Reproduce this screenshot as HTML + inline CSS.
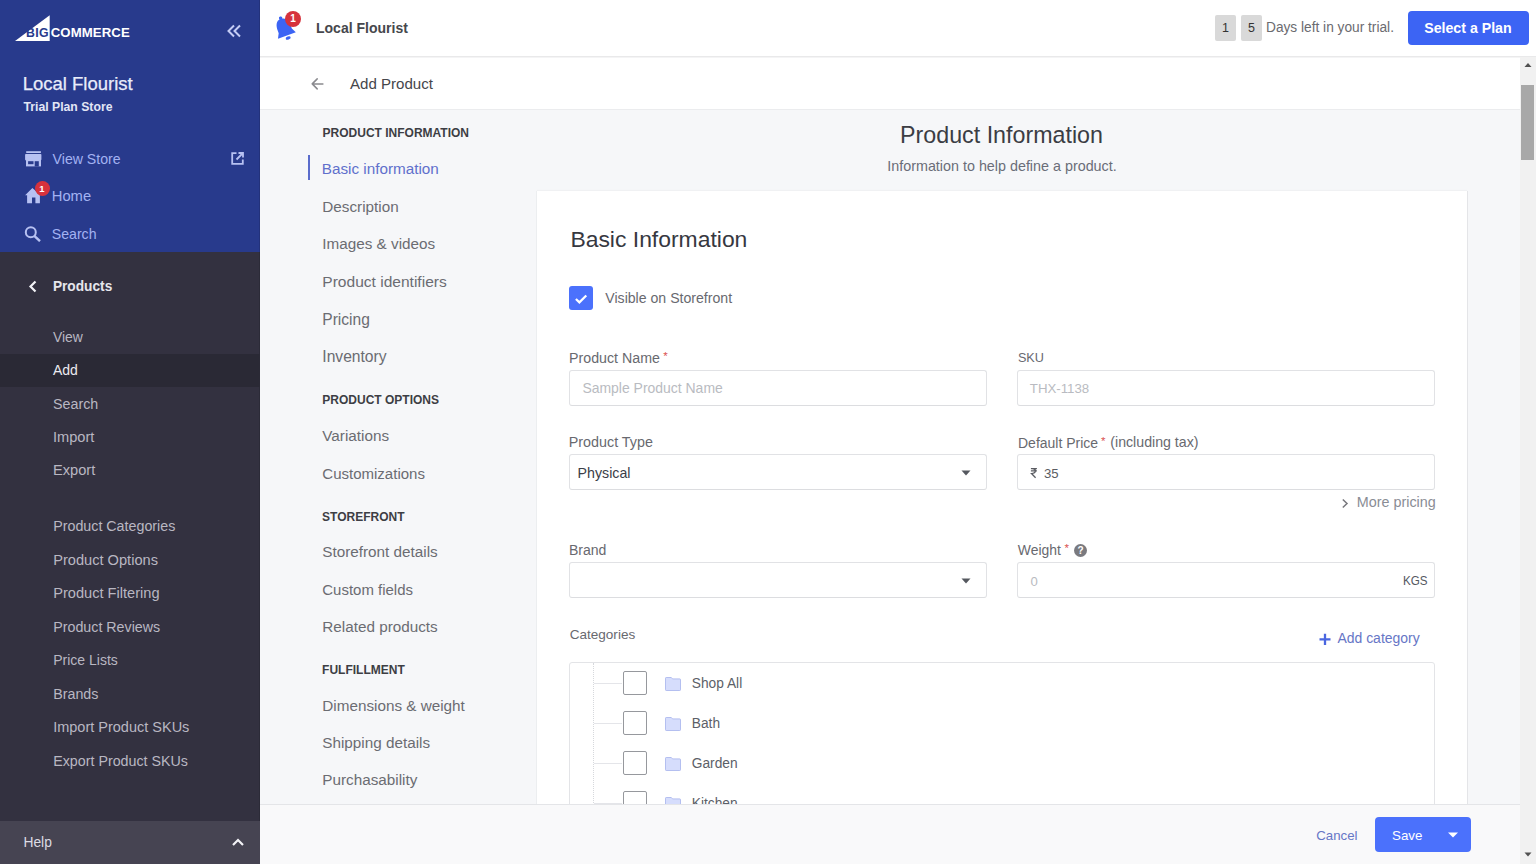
<!DOCTYPE html>
<html><head><meta charset="utf-8"><title>Add Product</title>
<style>
html,body{margin:0;padding:0;width:1536px;height:864px;overflow:hidden;background:#f6f7f9}
body{position:relative;font-family:"Liberation Sans",sans-serif}
.t{position:absolute;white-space:nowrap;line-height:1;font-family:"Liberation Sans",sans-serif}
.r{position:absolute}
</style></head><body>
<div class="r" style="left:0px;top:0px;width:260px;height:252px;background:#283a8c"></div>
<div class="r" style="left:0px;top:252px;width:260px;height:612px;background:#333140"></div>
<div class="r" style="left:259px;top:0px;width:1px;height:821px;background:rgba(0,0,0,0.12)"></div>
<div class="r" style="left:0px;top:354px;width:260px;height:33px;background:#2a2935"></div>
<div class="r" style="left:0px;top:821px;width:260px;height:43px;background:#464452"></div>
<svg class="r" style="left:14px;top:14px" width="120" height="30" viewBox="0 0 120 30">
<path d="M1 27 L35.7 1.3 L35.7 27 Z" fill="#fff"/>
</svg>
<div class="t" style="left:26.00px;top:26.90px;font-size:12.285px;color:#283a8c;font-weight:700;letter-spacing:0.4px">BIG</div>
<div class="t" style="left:50.70px;top:26.12px;font-size:13.200px;color:#fff;font-weight:700;letter-spacing:0.1px">COMMERCE</div>
<svg class="r" style="left:226px;top:24px" width="16" height="14" viewBox="0 0 16 14">
<path d="M8 1.5 L2.5 7 L8 12.5 M14 1.5 L8.5 7 L14 12.5" fill="none" stroke="#c4ccf5" stroke-width="2"/>
</svg>
<div class="t" style="left:22.66px;top:74.94px;font-size:18.500px;color:#e8ecfa;-webkit-text-stroke:0.25px #e8ecfa">Local Flourist</div>
<div class="t" style="left:23.50px;top:100.84px;font-size:12.230px;color:#e2e6f6;font-weight:700;">Trial Plan Store</div>
<svg class="r" style="left:25px;top:150px" width="18" height="18" viewBox="0 0 18 18">
<rect x="1.2" y="1.2" width="14.7" height="1.8" fill="#b7c1f2"/>
<rect x="0.1" y="3.9" width="16.3" height="6.5" rx="0.8" fill="#b7c1f2"/>
<rect x="1" y="10" width="15" height="6.4" fill="#b7c1f2"/>
<rect x="3.1" y="11.2" width="5.4" height="3" fill="#283a8c"/>
<rect x="9.7" y="11.2" width="4.1" height="5.3" fill="#283a8c"/>
</svg>
<div class="t" style="left:52.60px;top:152.44px;font-size:14.120px;color:#a3b2f2;">View Store</div>
<svg class="r" style="left:231px;top:152px" width="13" height="13" viewBox="0 0 13 13">
<path d="M5.5 1.2 H1.2 V11.8 H11.8 V7.5" fill="none" stroke="#b7c1f2" stroke-width="1.8"/>
<path d="M7.5 1 H12 V5.5 M12 1 L5.5 7.5" fill="none" stroke="#b7c1f2" stroke-width="1.8"/>
</svg>
<svg class="r" style="left:24px;top:187px" width="18" height="18" viewBox="0 0 18 18">
<path d="M8.4 0.9 L16.5 8.2 H15.9 V16.3 H11.4 V10.6 H8 V16.3 H3.1 V8.2 H1.1 Z" fill="#b7c1f2"/>
</svg>
<div class="r" style="left:34.5px;top:181px;width:15px;height:15px;border-radius:50%;background:#d6323c;color:#fff;font:700 9.5px/15px 'Liberation Sans',sans-serif;text-align:center">1</div>
<div class="t" style="left:51.76px;top:189.30px;font-size:14.760px;color:#a3b2f2;">Home</div>
<svg class="r" style="left:24px;top:226px" width="18" height="16" viewBox="0 0 18 16">
<circle cx="6.8" cy="6.3" r="5" fill="none" stroke="#b7c1f2" stroke-width="2"/>
<path d="M10.3 9.8 L16 15.2" stroke="#b7c1f2" stroke-width="2.4"/>
</svg>
<div class="t" style="left:51.76px;top:227.33px;font-size:14.135px;color:#a3b2f2;">Search</div>
<svg class="r" style="left:28px;top:280px" width="10" height="13" viewBox="0 0 10 13">
<path d="M7.5 1.5 L2.5 6.5 L7.5 11.5" fill="none" stroke="#f2f2f6" stroke-width="2.2"/>
</svg>
<div class="t" style="left:52.90px;top:279.99px;font-size:13.710px;color:#e6e6ec;font-weight:700;">Products</div>
<div class="t" style="left:52.90px;top:331.22px;font-size:13.913px;color:#b9b7c2;">View</div>
<div class="t" style="left:52.90px;top:363.25px;font-size:13.996px;color:#ecebf0;">Add</div>
<div class="t" style="left:53.00px;top:396.72px;font-size:14.270px;color:#b9b7c2;">Search</div>
<div class="t" style="left:53.00px;top:430.32px;font-size:14.627px;color:#b9b7c2;">Import</div>
<div class="t" style="left:53.00px;top:463.02px;font-size:14.627px;color:#b9b7c2;">Export</div>
<div class="t" style="left:53.20px;top:519.32px;font-size:14.270px;color:#b9b7c2;">Product Categories</div>
<div class="t" style="left:53.20px;top:552.62px;font-size:14.627px;color:#b9b7c2;">Product Options</div>
<div class="t" style="left:53.20px;top:586.32px;font-size:14.627px;color:#b9b7c2;">Product Filtering</div>
<div class="t" style="left:53.20px;top:619.92px;font-size:14.270px;color:#b9b7c2;">Product Reviews</div>
<div class="t" style="left:53.20px;top:653.22px;font-size:14.029px;color:#b9b7c2;">Price Lists</div>
<div class="t" style="left:53.20px;top:686.52px;font-size:14.270px;color:#b9b7c2;">Brands</div>
<div class="t" style="left:53.20px;top:719.72px;font-size:14.506px;color:#b9b7c2;">Import Product SKUs</div>
<div class="t" style="left:53.20px;top:753.82px;font-size:14.270px;color:#b9b7c2;">Export Product SKUs</div>
<div class="t" style="left:23.40px;top:835.68px;font-size:13.837px;color:#dddce4;">Help</div>
<svg class="r" style="left:231px;top:837px" width="14" height="10" viewBox="0 0 14 10">
<path d="M2 8 L7 3 L12 8" fill="none" stroke="#f2f2f6" stroke-width="2.2"/>
</svg>
<div class="r" style="left:260px;top:0px;width:1276px;height:864px;background:#f6f7f9"></div>
<div class="r" style="left:260px;top:0px;width:1276px;height:56px;background:#fff"></div>
<div class="r" style="left:260px;top:56px;width:1276px;height:1px;background:#e9e9ea"></div>
<div class="r" style="left:260px;top:57px;width:1276px;height:1px;background:#f4f4f5"></div>
<div class="r" style="left:260px;top:58px;width:1260px;height:51px;background:#fff"></div>
<div class="r" style="left:260px;top:109px;width:1260px;height:1px;background:#ebecee"></div>
<svg class="r" style="left:266px;top:6px" width="40" height="40" viewBox="0 0 40 40">
<g transform="translate(20.9,29.4) rotate(-20)" fill="#3c64f4">
<circle cx="0" cy="-18.3" r="1.7"/>
<path d="M0 -17.6 C-5.8 -17.6 -7 -12 -7 -8 L-7 -4.8 L-9.5 0 H9.5 L7 -4.8 L7 -8 C7 -12 5.8 -17.6 0 -17.6 Z"/>
<ellipse cx="0.3" cy="2.9" rx="2.6" ry="1.5"/>
</g>
</svg>
<div class="r" style="left:285px;top:10.5px;width:16.2px;height:16.2px;border-radius:50%;background:#d6323c;color:#fff;font:700 10px/16.2px 'Liberation Sans',sans-serif;text-align:center">1</div>
<div class="t" style="left:316.00px;top:21.42px;font-size:14.030px;color:#46474c;font-weight:700;">Local Flourist</div>
<div class="r" style="left:1215px;top:15px;width:21px;height:26px;background:#d9d9d9;border-radius:2px;font:12.5px/26px 'Liberation Sans',sans-serif;color:#333;text-align:center">1</div>
<div class="r" style="left:1241px;top:15px;width:21px;height:26px;background:#d9d9d9;border-radius:2px;font:12.5px/26px 'Liberation Sans',sans-serif;color:#333;text-align:center">5</div>
<div class="t" style="left:1266.00px;top:21.19px;font-size:13.718px;color:#6b6b70;">Days left in your trial.</div>
<div class="r" style="left:1408px;top:11px;width:121px;height:34px;background:#3c64f4;border-radius:4px"></div>
<div class="t" style="left:1424.20px;top:20.79px;font-size:14.180px;color:#fff;font-weight:700;">Select a Plan</div>
<svg class="r" style="left:300px;top:70px" width="30" height="30" viewBox="300 70 30 30">
<path d="M317.2 78.9 L312.2 83.9 L317.2 88.9 M312.2 83.9 H322.9" fill="none" stroke="#8a8a8f" stroke-width="1.5" stroke-linecap="round" stroke-linejoin="round"/>
</svg>
<div class="t" style="left:350.00px;top:76.13px;font-size:15.080px;color:#45464b;">Add Product</div>
<div class="t" style="left:322.60px;top:127.43px;font-size:12.010px;color:#3d3e44;font-weight:700;">PRODUCT INFORMATION</div>
<div class="r" style="left:308px;top:155px;width:2px;height:25px;background:#5a6ccc"></div>
<div class="t" style="left:321.76px;top:160.77px;font-size:15.270px;color:#6070cc;">Basic information</div>
<div class="t" style="left:322.30px;top:198.57px;font-size:15.270px;color:#6b6c72;">Description</div>
<div class="t" style="left:322.30px;top:236.27px;font-size:15.270px;color:#6b6c72;">Images &amp; videos</div>
<div class="t" style="left:322.30px;top:273.53px;font-size:15.560px;color:#6b6c72;">Product identifiers</div>
<div class="t" style="left:322.30px;top:311.71px;font-size:15.575px;color:#6b6c72;">Pricing</div>
<div class="t" style="left:322.30px;top:349.36px;font-size:15.639px;color:#6b6c72;">Inventory</div>
<div class="t" style="left:322.30px;top:394.44px;font-size:12.000px;color:#3d3e44;font-weight:700;">PRODUCT OPTIONS</div>
<div class="t" style="left:322.30px;top:428.37px;font-size:15.270px;color:#6b6c72;">Variations</div>
<div class="t" style="left:322.30px;top:466.27px;font-size:15.035px;color:#6b6c72;">Customizations</div>
<div class="t" style="left:322.10px;top:510.64px;font-size:12.000px;color:#3d3e44;font-weight:700;">STOREFRONT</div>
<div class="t" style="left:322.30px;top:544.37px;font-size:15.270px;color:#6b6c72;">Storefront details</div>
<div class="t" style="left:322.30px;top:582.11px;font-size:14.988px;color:#6b6c72;">Custom fields</div>
<div class="t" style="left:322.30px;top:618.97px;font-size:15.270px;color:#6b6c72;">Related products</div>
<div class="t" style="left:322.10px;top:664.44px;font-size:12.000px;color:#3d3e44;font-weight:700;">FULFILLMENT</div>
<div class="t" style="left:322.30px;top:697.77px;font-size:15.270px;color:#6b6c72;">Dimensions &amp; weight</div>
<div class="t" style="left:322.30px;top:735.27px;font-size:15.270px;color:#6b6c72;">Shipping details</div>
<div class="t" style="left:322.30px;top:772.37px;font-size:15.270px;color:#6b6c72;">Purchasability</div>
<div class="t" style="left:900.08px;top:124.31px;font-size:23.260px;color:#3b3d44;">Product Information</div>
<div class="t" style="left:887.30px;top:159.06px;font-size:14.340px;color:#6a6d78;">Information to help define a product.</div>
<div class="r" style="left:537px;top:191px;width:930px;height:700px;background:#fff;box-shadow:1px 0 0 #e4e5e8,-1px 0 0 #eceef0,0 -1px 1px #f0f1f3"></div>
<div class="t" style="left:570.40px;top:227.90px;font-size:22.910px;color:#36383f;">Basic Information</div>
<div class="r" style="left:569px;top:286px;width:24px;height:24px;background:#4b71fc;border-radius:3px"></div>
<svg class="r" style="left:569px;top:286px" width="24" height="24" viewBox="0 0 24 24">
<path d="M6.9 13 L10.4 16.4 L17.3 9.5" fill="none" stroke="#fff" stroke-width="2.2"/>
</svg>
<div class="t" style="left:605.30px;top:291.15px;font-size:14.110px;color:#68696f;">Visible on Storefront</div>
<div class="t" style="left:569.08px;top:351.17px;font-size:14.213px;color:#68696f;">Product Name</div>
<div class="t" style="left:663.30px;top:350.56px;font-size:11.500px;color:#db5252;">*</div>
<div class="r" style="left:569px;top:370px;width:418px;height:36px;background:#fff;border:1px solid #e1e2e5;border-bottom-color:#dcdde0;border-radius:3px;box-sizing:border-box"></div>
<div class="t" style="left:582.40px;top:381.78px;font-size:13.960px;color:#b9bbc1;">Sample Product Name</div>
<div class="t" style="left:1017.90px;top:352.17px;font-size:12.675px;color:#68696f;">SKU</div>
<div class="r" style="left:1017px;top:370px;width:418px;height:36px;background:#fff;border:1px solid #e1e2e5;border-bottom-color:#dcdde0;border-radius:3px;box-sizing:border-box"></div>
<div class="t" style="left:1029.80px;top:382.38px;font-size:13.250px;color:#b9bbc1;">THX-1138</div>
<div class="t" style="left:568.76px;top:435.26px;font-size:14.338px;color:#68696f;">Product Type</div>
<div class="r" style="left:569px;top:454px;width:418px;height:36px;background:#fff;border:1px solid #e1e2e5;border-bottom-color:#dcdde0;border-radius:3px;box-sizing:border-box"></div>
<div class="t" style="left:577.60px;top:465.58px;font-size:14.200px;color:#3b3e48;">Physical</div>
<svg class="r" style="left:961px;top:470px" width="10" height="6" viewBox="0 0 10 6"><path d="M0.5 0.5 H9.5 L5 5.5 Z" fill="#55585f"/></svg>
<div class="t" style="left:1018.00px;top:435.53px;font-size:14.015px;color:#68696f;">Default Price</div>
<div class="t" style="left:1101.00px;top:435.56px;font-size:11.500px;color:#db5252;">*</div>
<div class="t" style="left:1110.30px;top:435.40px;font-size:14.170px;color:#68696f;">(including tax)</div>
<div class="r" style="left:1017px;top:454px;width:418px;height:36px;background:#fff;border:1px solid #e1e2e5;border-bottom-color:#dcdde0;border-radius:3px;box-sizing:border-box"></div>
<svg class="r" style="left:1028px;top:466px" width="12" height="14" viewBox="1028 466 12 14"><path d="M1030.9 468.6 H1036.9 M1030.9 470.8 H1036.9 M1032.2 468.6 C1034.9 468.6 1035.4 469.6 1035.4 470.8 C1035.4 472.4 1034.3 473.5 1031.5 473.5 L1035.6 477.8" fill="none" stroke="#5a5c62" stroke-width="1.25"/></svg>
<div class="t" style="left:1043.90px;top:466.54px;font-size:13.181px;color:#5a5c62;">35</div>
<svg class="r" style="left:1341px;top:498px" width="8" height="11" viewBox="0 0 8 11">
<path d="M1.8 1.5 L6 5.5 L1.8 9.5" fill="none" stroke="#77777c" stroke-width="1.5"/>
</svg>
<div class="t" style="left:1356.76px;top:495.23px;font-size:14.368px;color:#8a8d95;">More pricing</div>
<div class="t" style="left:568.92px;top:543.09px;font-size:14.063px;color:#68696f;">Brand</div>
<div class="r" style="left:569px;top:562px;width:418px;height:36px;background:#fff;border:1px solid #e1e2e5;border-bottom-color:#dcdde0;border-radius:3px;box-sizing:border-box"></div>
<svg class="r" style="left:961px;top:578px" width="10" height="6" viewBox="0 0 10 6"><path d="M0.5 0.5 H9.5 L5 5.5 Z" fill="#55585f"/></svg>
<div class="t" style="left:1017.80px;top:544.23px;font-size:13.900px;color:#68696f;">Weight</div>
<div class="t" style="left:1064.50px;top:542.66px;font-size:11.500px;color:#db5252;">*</div>
<div class="r" style="left:1074px;top:544px;width:13px;height:13px;border-radius:50%;background:#7a7a7f;color:#fff;font:700 10px/13px 'Liberation Sans',sans-serif;text-align:center">?</div>
<div class="r" style="left:1017px;top:562px;width:418px;height:36px;background:#fff;border:1px solid #e1e2e5;border-bottom-color:#dcdde0;border-radius:3px;box-sizing:border-box"></div>
<div class="t" style="left:1030.40px;top:574.66px;font-size:13.162px;color:#b9bbc1;">0</div>
<div class="t" style="left:1402.50px;top:574.16px;font-size:13.513px;color:#55585f;transform:scaleX(0.863);transform-origin:0 0">KGS</div>
<div class="t" style="left:569.70px;top:628.13px;font-size:13.550px;color:#68696f;">Categories</div>
<svg class="r" style="left:1318px;top:632px" width="14" height="14" viewBox="0 0 14 14">
<path d="M7 1.8 V13 M1.5 7.4 H12.5" stroke="#4a66e0" stroke-width="2.3"/>
</svg>
<div class="t" style="left:1337.40px;top:632.37px;font-size:13.970px;color:#6676c6;">Add category</div>
<div class="r" style="left:569px;top:662px;width:866px;height:300px;background:#fff;border:1px solid #e3e4e7;border-radius:3px;box-sizing:border-box"></div>
<div class="r" style="left:593px;top:663px;width:1px;height:200px;border-left:1px dotted #d6d8dc;box-sizing:border-box"></div>
<div class="r" style="left:594px;top:683px;width:28px;height:1px;background:#e4e5e9"></div>
<div class="r" style="left:623px;top:671px;width:24px;height:24px;background:#fff;border:1px solid #96989d;border-radius:2px;box-sizing:border-box"></div>
<svg class="r" style="left:665px;top:676.5px" width="16" height="14" viewBox="0 0 16 14">
<path d="M0.5 1.2 Q0.5 0.5 1.2 0.5 H6.3 L7.6 1.9 H14.8 Q15.5 1.9 15.5 2.6 V12.8 Q15.5 13.5 14.8 13.5 H1.2 Q0.5 13.5 0.5 12.8 Z" fill="#d6ddfc" stroke="#aeb9ee" stroke-width="0.9"/>
</svg>
<div class="t" style="left:691.80px;top:676.67px;font-size:13.740px;color:#5c5f68;">Shop All</div>
<div class="r" style="left:594px;top:723px;width:28px;height:1px;background:#e4e5e9"></div>
<div class="r" style="left:623px;top:711px;width:24px;height:24px;background:#fff;border:1px solid #96989d;border-radius:2px;box-sizing:border-box"></div>
<svg class="r" style="left:665px;top:716.5px" width="16" height="14" viewBox="0 0 16 14">
<path d="M0.5 1.2 Q0.5 0.5 1.2 0.5 H6.3 L7.6 1.9 H14.8 Q15.5 1.9 15.5 2.6 V12.8 Q15.5 13.5 14.8 13.5 H1.2 Q0.5 13.5 0.5 12.8 Z" fill="#d6ddfc" stroke="#aeb9ee" stroke-width="0.9"/>
</svg>
<div class="t" style="left:691.80px;top:716.67px;font-size:13.740px;color:#5c5f68;">Bath</div>
<div class="r" style="left:594px;top:763px;width:28px;height:1px;background:#e4e5e9"></div>
<div class="r" style="left:623px;top:751px;width:24px;height:24px;background:#fff;border:1px solid #96989d;border-radius:2px;box-sizing:border-box"></div>
<svg class="r" style="left:665px;top:756.5px" width="16" height="14" viewBox="0 0 16 14">
<path d="M0.5 1.2 Q0.5 0.5 1.2 0.5 H6.3 L7.6 1.9 H14.8 Q15.5 1.9 15.5 2.6 V12.8 Q15.5 13.5 14.8 13.5 H1.2 Q0.5 13.5 0.5 12.8 Z" fill="#d6ddfc" stroke="#aeb9ee" stroke-width="0.9"/>
</svg>
<div class="t" style="left:691.80px;top:756.67px;font-size:13.740px;color:#5c5f68;">Garden</div>
<div class="r" style="left:594px;top:803px;width:28px;height:1px;background:#e4e5e9"></div>
<div class="r" style="left:623px;top:791px;width:24px;height:24px;background:#fff;border:1px solid #96989d;border-radius:2px;box-sizing:border-box"></div>
<svg class="r" style="left:665px;top:796.5px" width="16" height="14" viewBox="0 0 16 14">
<path d="M0.5 1.2 Q0.5 0.5 1.2 0.5 H6.3 L7.6 1.9 H14.8 Q15.5 1.9 15.5 2.6 V12.8 Q15.5 13.5 14.8 13.5 H1.2 Q0.5 13.5 0.5 12.8 Z" fill="#d6ddfc" stroke="#aeb9ee" stroke-width="0.9"/>
</svg>
<div class="t" style="left:691.80px;top:796.67px;font-size:13.740px;color:#5c5f68;">Kitchen</div>
<div class="r" style="left:260px;top:804px;width:1260px;height:60px;background:#f9f9fa;border-top:1px solid #e4e5e8;box-sizing:border-box"></div>
<div class="t" style="left:1316.30px;top:828.79px;font-size:13.240px;color:#6676c6;">Cancel</div>
<div class="r" style="left:1375px;top:817px;width:96px;height:35px;background:#4b71fc;border-radius:4px"></div>
<div class="t" style="left:1392.00px;top:828.70px;font-size:13.345px;color:#fff;">Save</div>
<svg class="r" style="left:1447px;top:831px" width="12" height="8" viewBox="0 0 12 8"><path d="M1 1.5 H11 L6 6.5 Z" fill="#fff"/></svg>
<div class="r" style="left:1520px;top:57px;width:16px;height:807px;background:#f1f1f1"></div>
<div class="r" style="left:1521px;top:85px;width:13px;height:75px;background:#a8a8a8"></div>
<svg class="r" style="left:1520px;top:60px" width="16" height="10" viewBox="0 0 16 10"><path d="M4.5 7 H11.5 L8 3 Z" fill="#505050"/></svg>
<svg class="r" style="left:1520px;top:850px" width="16" height="10" viewBox="0 0 16 10"><path d="M4.5 2.5 H11.5 L8 6.5 Z" fill="#505050"/></svg>
</body></html>
